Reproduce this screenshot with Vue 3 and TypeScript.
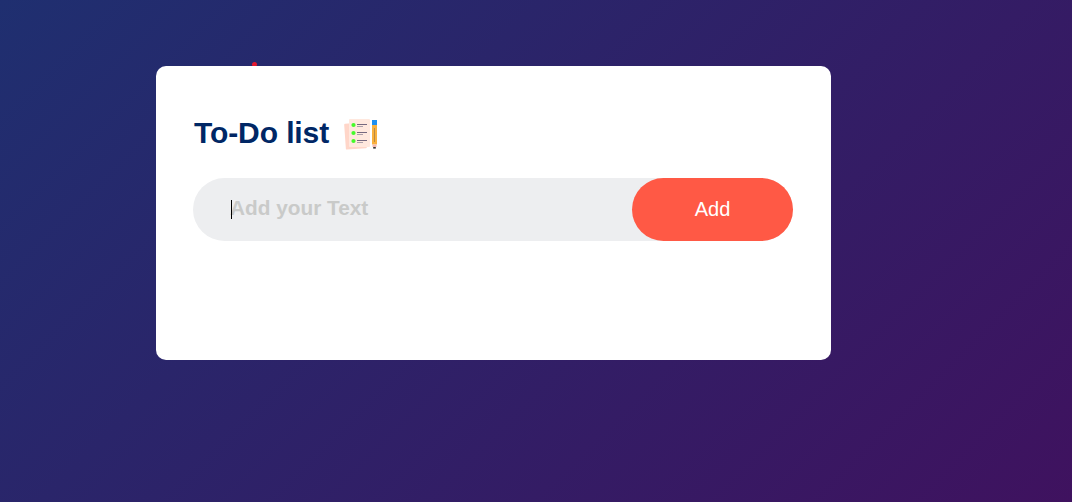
<script setup lang="ts">
const placeholder: string = "Add your Text";
const rows: number[] = [0, 1, 2];
</script>

<template>
  <div class="page">
    <main class="card">
      <span class="dot"></span>
      <h2 class="title">
        <span>To-Do list</span>
        <svg class="icon" viewBox="14 14 34 32" width="34" height="32" aria-hidden="true">
          <rect x="15" y="18" width="21" height="26" rx="1" fill="#ffd6c9" transform="rotate(-4 25 31)" />
          <rect x="19" y="14" width="21" height="28" rx="1" fill="#ffe8de" />
          <g v-for="r in rows" :key="r">
            <circle cx="23.5" :cy="20 + r * 8" r="2.1" fill="#45fb2a" />
            <rect x="27" :y="19 + r * 8" width="10" height="1" fill="#75687f" />
            <rect x="27" :y="21 + r * 8" width="6" height="1" fill="#aca0aa" />
          </g>
          <rect x="42" y="15" width="5" height="5" fill="#1e90f0" />
          <rect x="42" y="20" width="5" height="19.5" fill="#f9b13e" />
          <rect x="44" y="23" width="1" height="14" fill="#b98a45" />
          <rect x="42.5" y="39.5" width="4" height="2.5" fill="#f3b8b0" />
          <rect x="43.2" y="42" width="2.6" height="1.6" fill="#333" />
        </svg>
      </h2>
      <div class="row">
        <div class="field">
          <span class="caret"></span>
          <input class="input" type="text" :placeholder="placeholder" />
        </div>
        <button class="add" type="button">Add</button>
      </div>
    </main>
  </div>
</template>

<style scoped>
.page {
  width: 1072px;
  height: 502px;
  box-sizing: border-box;
  padding: 66px 0 0 156px;
  overflow: hidden;
  background: linear-gradient(135deg, #1f2f70, #3f125f);
  font-family: "Liberation Sans", Arial, sans-serif;
}
.card {
  position: relative;
  width: 675px;
  height: 294px;
  box-sizing: border-box;
  padding: 48px 38px 0 37px;
  background: #fff;
  border-radius: 10px;
}
.dot {
  position: absolute;
  left: 95.5px;
  top: -4px;
  width: 5px;
  height: 4px;
  border-radius: 2.5px 2.5px 1px 1px;
  background: #e3182d;
}
.title {
  display: flex;
  align-items: center;
  height: 38px;
  margin: 0 0 26px;
  padding-left: 1px;
  color: #002765;
  font-size: 30px;
  font-weight: 700;
  line-height: 38px;
  letter-spacing: -0.1px;
}
.icon {
  margin: 4px 0 0 15px;
}
.row {
  display: flex;
  width: 600px;
  height: 63px;
  border-radius: 32px;
  background: #edeef0;
}
.field {
  position: relative;
  flex: 1;
  display: flex;
  align-items: center;
  padding-left: 37px;
  padding-bottom: 3px;
}
.caret {
  position: absolute;
  left: 38px;
  top: 22px;
  width: 1px;
  height: 19px;
  background: #000;
}
.input {
  width: 100%;
  padding: 0;
  border: 0;
  outline: 0;
  background: transparent;
  font: 700 20.8px "Liberation Sans", Arial, sans-serif;
}
.input::placeholder {
  color: #c9cac9;
  opacity: 1;
}
.add {
  width: 161px;
  height: 63px;
  border: 0;
  border-radius: 32px;
  background: #ff5945;
  color: #fff;
  font: 400 20px "Liberation Sans", Arial, sans-serif;
}
</style>
